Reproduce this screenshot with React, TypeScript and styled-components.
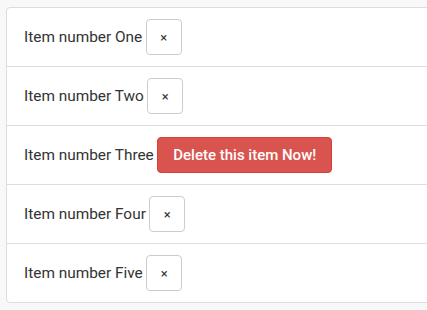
import React, { useState } from "react";
import styled, { createGlobalStyle } from "styled-components";

const Global = createGlobalStyle`
  html, body { margin: 0; padding: 0; background: #f8f8f8; overflow: hidden; }
  body { font-family: Roboto, "Helvetica Neue", Arial, sans-serif; }
`;

const Page = styled.div`
  padding: 7px 0 0 6px;
  width: 440px;
`;

const List = styled.ul`
  list-style: none;
  margin: 0;
  padding: 0;
  background: #fff;
  border: 1px solid #dddddd;
  border-radius: 4px;
  width: 440px;
`;

const Row = styled.li`
  display: flex;
  align-items: center;
  height: 36px;
  padding: 11px 17px;
  border-top: 1px solid #dddddd;
  &:first-child { border-top: none; }
  font-size: 15.4px;
  color: #333;
`;

const Label = styled.span`
  margin-right: 3.5px;
`;

const CloseButton = styled.button`
  box-sizing: border-box;
  width: 36px;
  height: 36px;
  background: #fff;
  border: 1px solid #cccccc;
  border-radius: 4px;
  color: #333;
  font-family: Roboto, Arial, sans-serif;
  font-size: 13px;
  padding: 0;
  display: flex;
  align-items: center;
  justify-content: center;
  cursor: pointer;
`;

const DeleteButton = styled.button`
  box-sizing: border-box;
  height: 36px;
  padding: 0 15px;
  background: #d9534f;
  border: 1px solid #d43f3a;
  border-radius: 4px;
  color: #fff;
  font-family: Roboto, Arial, sans-serif;
  font-size: 15px;
  font-weight: 500;
  cursor: pointer;
`;

const items = ["One", "Two", "Three", "Four", "Five"];

export default function App() {
  const [armed] = useState("Three");
  return (
    <>
      <Global />
      <Page>
        <List>
          {items.map((n) => (
            <Row key={n}>
              <Label>Item number {n}</Label>
              {armed === n ? (
                <DeleteButton>Delete this item Now!</DeleteButton>
              ) : (
                <CloseButton>×</CloseButton>
              )}
            </Row>
          ))}
        </List>
      </Page>
    </>
  );
}
